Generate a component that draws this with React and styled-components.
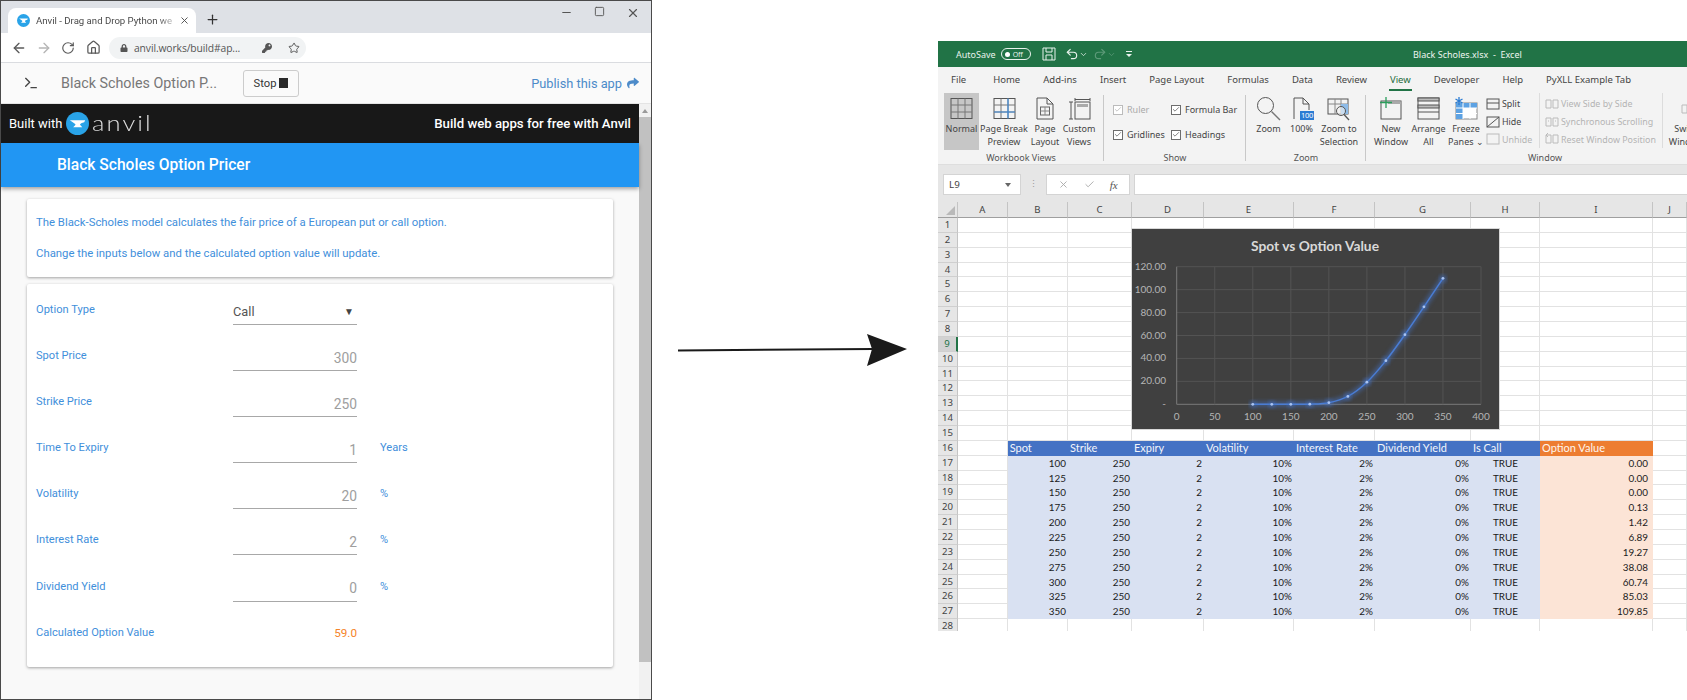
import React from "react";
import styled, { createGlobalStyle } from "styled-components";
import { ArrowLeft, ArrowRight, RotateCw, House, Star, X, Minus, Square, Plus, ChevronDown, Undo2, Redo2, Check, Terminal } from "lucide-react";
import { FaShare, FaKey, FaLock } from "react-icons/fa";

const Global = createGlobalStyle`
  html, body { margin: 0; padding: 0; background: #fff; }
  body { width: 1687px; height: 700px; overflow: hidden; font-family: Roboto, "Liberation Sans", sans-serif; }
  * { box-sizing: border-box; }
`;

const Page = styled.div`display: flex; width: 1687px; height: 700px; overflow: hidden; background: #fff;`;

/* ---------- browser ---------- */
const Browser = styled.div`
  width: 652px; height: 700px; flex: none; display: flex; flex-direction: column;
  border: 1px solid #4a4a4a; background: #f9f9f9;
`;
const TabStrip = styled.div`height: 32px; flex: none; background: #dee1e6; display: flex; align-items: flex-end; padding-left: 7px;`;
const Tab = styled.div`
  width: 188px; height: 25px; background: #fff; border-radius: 8px 8px 0 0; display: flex; align-items: center;
  padding: 0 0 0 9px; gap: 6px; color: #4a4a4a; font-size: 11px;
`;
const TabTitle = styled.span`
  width: 137px; flex: none; white-space: nowrap; overflow: hidden; font-size: 9.6px;
  -webkit-mask-image: linear-gradient(to right, #000 88%, rgba(0,0,0,.35));
`;
const NewTab = styled.div`margin: 0 0 4px 9px; height: 20px; display: flex; align-items: center; color: #333;`;
const WinButtons = styled.div`margin-left: auto; align-self: flex-start; display: flex; gap: 21px; padding: 5px 11px 0 0; color: #555;`;
const NavBar = styled.div`height: 30px; flex: none; background: #fff; border-bottom: 1px solid #dadce0; display: flex; align-items: center; padding-left: 10px;`;
const NavIcon = styled.span`width: 25px; display: flex; justify-content: flex-start; color: ${p => p.$dim ? "#b5b5b5" : "#5a5a5a"};`;
const UrlPill = styled.div`
  margin-left: -2px; width: 197px; height: 22px; border-radius: 11px; background: #f1f3f4; display: flex; align-items: center;
  padding-left: 11px; color: #555; font-size: 11px; font-family: "Open Sans", sans-serif;
`;
const UrlText = styled.span`margin-left: 6px; width: 128px; font-size: 10.3px; letter-spacing: -0.1px; white-space: nowrap;`;
const StarSlot = styled(NavIcon)`margin-left: 16px; width: 14px;`;
const AppBar = styled.div`height: 41px; flex: none; background: #fafafa; border-bottom: 1px solid #e4e4e4; display: flex; align-items: center; padding-left: 22px;`;
const AppTitle = styled.span`margin-left: 22px; width: 182px; color: #777; font-size: 14.3px; white-space: nowrap;`;
const StopButton = styled.div`
  width: 56px; height: 27px; border: 1px solid #ccc; border-radius: 3px; display: flex; align-items: center; justify-content: center; gap: 3px;
  color: #333; font-size: 11.2px; background: #fafafa;
`;
const StopSquare = styled.span`width: 9px; height: 10px; background: #2a2a2a;`;
const Publish = styled.div`margin-left: auto; padding-right: 12px; display: flex; align-items: center; gap: 5px; color: #4d8bc9; font-size: 12.8px;`;
const Viewport = styled.div`flex: 1; display: flex; min-height: 0;`;
const Main = styled.div`flex: 1; min-width: 0; display: flex; flex-direction: column;`;
const BlackBar = styled.div`height: 39px; flex: none; background: #181818; color: #fff; display: flex; align-items: center; padding: 0 8px; font-size: 13px;`;
const BuiltWith = styled.span`margin-right: 4px;`;
const Wordmark = styled.span`margin-left: 3px; font-family: Lato, sans-serif; font-weight: 300; font-size: 21px; letter-spacing: 1.7px; line-height: 1; color: #ddd; transform: scaleX(1.22); transform-origin: left; margin-top: -3px;`;
const BuildLink = styled.span`margin-left: auto; font-weight: 500; font-size: 13.2px;`;
const BlueBar = styled.div`
  height: 44px; flex: none; background: #2196f3; color: #fff; display: flex; align-items: center; padding-left: 56px;
  font-size: 15.6px; font-weight: 500; box-shadow: 0 2px 4px rgba(0,0,0,.35); position: relative;
`;
const Content = styled.div`padding: 12px 26px; display: flex; flex-direction: column; gap: 7px;`;
const Card = styled.div`background: #fff; padding: 0 9px; box-shadow: 0 1px 3px rgba(0,0,0,.35); border-radius: 2px;`;
const IntroCard = styled(Card)`height: 78px; padding-top: 16px;`;
const Para = styled.p`margin: 0 0 17px; color: #3f8fdb; font-size: 11.35px; line-height: 14px; white-space: nowrap;`;
const FormCard = styled(Card)`height: 383px; padding-top: 2px;`;
const Row = styled.div`height: 46.1px; display: grid; grid-template-columns: 197px 124px 23px auto; align-items: start;`;
const Label = styled.div`margin-top: 17px; line-height: 14px; font-size: 11.1px; color: #3f8fdb;`;
const Field = styled.div`
  margin-top: 15px; height: 24px; padding-bottom: 2px; display: flex; align-items: center; justify-content: ${p => p.$left ? "space-between" : "flex-end"};
  border-bottom: 1px solid #a8a8a8; font-size: ${p => p.$left ? 12.8 : 13.8}px; color: ${p => p.$left ? "#555" : "#9e9e9e"};
`;
const Arrowhead = styled.span`font-size: 10px; color: #444; margin-right: 3px;`;
const ValueText = styled.div`margin-top: 17px; line-height: 14px; text-align: right; font-size: 11.7px; color: #f5842a;`;
const Unit = styled.div`grid-column: 4; margin-top: 17px; line-height: 14px; font-size: 11.1px; color: #3f8fdb;`;
const Scrollbar = styled.div`width: 12px; flex: none; background: #f1f1f1; display: flex; flex-direction: column; align-items: center;`;
const ScrollUp = styled.div`height: 13px; flex: none; padding-top: 5px; &::before { content: ""; display: block; border: 3px solid transparent; border-top: 0; border-bottom: 4px solid #9a9a9a; }`;
const ScrollThumb = styled.div`width: 100%; height: 545px; background: #c1c1c1;`;

/* ---------- arrow ---------- */
const ArrowZone = styled.div`width: 286px; flex: none; padding: 333px 0 0 26px;`;

/* ---------- excel ---------- */
const Excel = styled.div`
  width: 749px; height: 590px; flex: none; margin-top: 41px; display: flex; flex-direction: column; overflow: hidden;
  font-family: "Noto Sans", sans-serif; background: #e6e6e6;
`;
const TitleBar = styled.div`height: 26px; flex: none; background: #217346; color: #fff; display: flex; align-items: center; font-size: 9px;`;
const QuickAccess = styled.div`width: 475px; flex: none; display: flex; align-items: center; padding-left: 18px; color: #e8f2ec;`;
const Toggle = styled.span`
  margin-left: 5px; width: 30px; height: 12px; border: 1px solid #e8f2ec; border-radius: 6px; display: flex; align-items: center; padding-left: 3px; gap: 3px; font-size: 7px;
  &::before { content: ""; width: 5px; height: 5px; border-radius: 50%; background: #fff; }
`;
const QaIcon = styled.span`display: flex; margin-left: ${p => p.$gap || 0}px; color: ${p => p.$dim ? "#5d9a79" : "#e8f2ec"};`;
const DocTitle = styled.span`white-space: pre; font-size: 9px; color: #eef5f0;`;
const TabRow = styled.div`height: 25px; flex: none; background: #f3f3f3; display: flex; align-items: center; gap: 23px; padding-left: 13px; font-size: 9.5px; color: #444;`;
const RibbonTab = styled.span`
  position: relative; white-space: nowrap; ${p => p.$first ? "margin-right: 4px;" : ""}
  ${p => p.$active ? `color: #1e6b40; &::after { content: ""; position: absolute; left: -1px; right: -1px; bottom: -5px; height: 2px; background: #217346; }` : ""}
`;
const Ribbon = styled.div`height: 73px; flex: none; background: #f3f3f3; display: flex; border-bottom: 1px solid #dedede;`;
const Group = styled.div`
  width: ${p => p.$w}px; flex: none; display: flex; flex-direction: column; position: relative;
  &::after { content: ${p => p.$noSep ? "none" : '""'}; position: absolute; right: 0; top: 3px; bottom: 3px; width: 1px; background: #c8c8c8; }
`;
const GroupBody = styled.div`flex: 1; display: flex; padding: 1px 0 0 ${p => p.$pad ?? 6}px; min-height: 0;`;
const GroupLabel = styled.div`height: 15px; flex: none; padding-top: 3px; text-align: center; font-size: 9px; line-height: 12px; color: #555;`;
const BigBtn = styled.div`
  width: ${p => p.$w}px; height: 57px; flex: none; display: flex; flex-direction: column; align-items: center; padding-top: 4px;
  background: ${p => p.$on ? "#c6c6c6" : "transparent"}; color: #444;
`;
const BigIcon = styled.span`height: 23px; display: flex; align-items: center; justify-content: center; flex: none; position: relative;`;
const BigText = styled.span`margin-top: 2px; font-size: 9px; line-height: 13px; text-align: center; white-space: pre; color: #444;`;
const Badge = styled.span`position: absolute; left: 7px; bottom: 0; background: #2b7cd3; color: #fff; font-size: 7.5px; line-height: 9px; padding: 0 1px; letter-spacing: -.3px;`;
const ShowGrid = styled.div`
  display: grid; grid-template-columns: 58px auto; grid-auto-rows: 25px; padding: 4px 0 0 3px; align-items: center;
`;
const CheckItem = styled.div`display: flex; align-items: center; gap: 4px; font-size: 9px; color: ${p => p.$off ? "#aaa" : "#444"}; white-space: nowrap;`;
const CheckBox = styled.span`width: 10px; height: 10px; border: 1px solid ${p => p.$off ? "#bbb" : "#6d6d6d"}; background: #fff; display: flex; align-items: center; justify-content: center; color: ${p => p.$off ? "#aaa" : "#444"};`;
const SmallCol = styled.div`
  width: ${p => p.$w}px; flex: none; display: flex; flex-direction: column; padding-top: 2px; ${p => p.$line ? "border-right: 1px solid #dcdcdc; margin-right: 5px; height: 55px;" : ""}
`;
const SmallItem = styled.div`height: 18.7px; display: flex; align-items: center; gap: 2px; font-size: 8.9px; color: ${p => p.$off ? "#b4b4b4" : "#444"}; white-space: nowrap;`;
const FormulaStrip = styled.div`height: 37px; flex: none; padding: 9px 0 7px 5px; display: flex; background: #e6e6e6;`;
const NameBox = styled.div`width: 78px; background: #fff; border: 1px solid #d4d4d4; display: flex; align-items: center; justify-content: space-between; padding: 0 9px 0 5px; font-size: 9.8px; color: #444;`;
const Caret = styled.span`border: 3px solid transparent; border-top: 4px solid #666; border-bottom: 0;`;
const Dots = styled.span`width: 25px; text-align: center; color: #999; font-size: 9px; line-height: 20px;`;
const FxBox = styled.div`width: 84px; background: #fff; border: 1px solid #d4d4d4; display: flex; align-items: center; justify-content: space-around; padding: 0 4px; color: #aaa;`;
const FxText = styled.span`font-family: "Liberation Serif", serif; font-style: italic; font-size: 11px; color: #555;`;
const FormulaInput = styled.div`flex: 1; margin-left: 4px; background: #fff; border: 1px solid #d4d4d4; border-right: 0;`;
const Sheet = styled.div`
  position: relative; height: 429px; flex: none; overflow: hidden; background: #fff; display: grid; font-family: Lato, sans-serif;
  grid-template-columns: 20px 49.7px 60.3px 64px 72px 90px 81px 96px 69px 113px 34px;
  grid-template-rows: 16px repeat(28, 14.87px);
`;
const Corner = styled.div`background: #e6e6e6; border-bottom: 1px solid #9f9f9f; border-right: 1px solid #c4c4c4; position: relative; &::after { content: ""; position: absolute; right: 2px; bottom: 2px; border-style: solid; border-width: 0 0 9px 9px; border-color: transparent transparent #b9b9b9 transparent; }`;
const ColHead = styled.div`
  background: #e6e6e6; border-bottom: 1px solid #9f9f9f; border-right: 1px solid #c4c4c4; text-align: center; color: #444;
  font-family: "Noto Sans", sans-serif; font-size: 9.6px; line-height: 15px;
`;
const RowHead = styled.div`
  background: ${p => p.$sel ? "#d2d2d2" : "#e6e6e6"}; border-bottom: 1px solid #cfcfcf; border-right: ${p => p.$sel ? "2px solid #217346" : "1px solid #c4c4c4"};
  text-align: center; color: ${p => p.$sel ? "#217346" : "#444"}; font-family: "Noto Sans", sans-serif; font-size: 9.6px; line-height: 14px;
`;
const tones = {
  plain: "background:#fff;border-right:1px solid #e2e2e2;border-bottom:1px solid #e2e2e2;color:#222;",
  head: "background:#4472c4;color:#f2f5fb;font-size:11px;",
  orangeHead: "background:#ed7d31;color:#fff5ee;font-size:11px;",
  data: "background:#d9e1f2;color:#1a1a1a;",
  orange: "background:#fce4d6;color:#1a1a1a;",
};
const Cell = styled.div`
  font-size: 9.9px; ${p => tones[p.$tone]} line-height: 14.5px; white-space: nowrap; padding: 0 ${p => p.$pr ?? 2}px 0 2px;
  text-align: ${p => p.$align || "right"};
`;
const ChartBox = styled.div`position: absolute; left: 194px; top: 27px; width: 367px; height: 200px; background: #404040; box-shadow: 0 0 0 1px #d8d8d8;`;

/* ---------- icons ---------- */
const AnvilMark = ({ size }) => (
  <svg width={size} height={size} viewBox="0 0 24 24">
    <circle cx="12" cy="12" r="12" fill="#29a3e8" />
    <path d="M4 8.5 H20 L19 10.8 C16.5 11.3 14.8 12.2 14.6 13.4 L17 16 H7.5 L10 13.4 C9.6 11.8 6.5 10.5 4 8.5Z" fill="#fff" />
  </svg>
);
const S = { fill: "none", stroke: "#555", strokeWidth: 1 };
const GridIcon = ({ blue }) => (
  <svg width="23" height="23" viewBox="0 0 23 23" {...S}>
    <rect x="1" y="1.5" width="21" height="20" />
    <path d="M8 1.5V21.5M15 1.5V21.5M1 8H22M1 15H22" stroke="#777" />
    {blue && <path d="M15 1.5V21.5M1 15H22" stroke="#3f8ad8" strokeWidth="1.2" />}
  </svg>
);
const DocIcon = () => (
  <svg width="18" height="23" viewBox="0 0 18 23" {...S}>
    <path d="M1 1H11L17 7V22H1Z M11 1V7H17" />
    <rect x="4.5" y="10" width="9" height="8" stroke="#666" />
    <path d="M4.5 14H13.5M9 10V18" stroke="#888" />
  </svg>
);
const CustomViewsIcon = () => (
  <svg width="23" height="23" viewBox="0 0 23 23" {...S}>
    <path d="M7 1V4M22 1V4M7 2.5H22" />
    <rect x="7" y="5" width="15" height="17" />
    <rect x="9" y="7" width="11" height="3" fill="#aaa" stroke="none" />
    <path d="M1 5H5M3 5V22M1 22H5" />
  </svg>
);
const MagnifierIcon = () => (
  <svg width="25" height="25" viewBox="0 0 25 25" {...S}>
    <circle cx="9.5" cy="9.5" r="8" />
    <path d="M15.5 15.5L24 24" stroke="#777" strokeWidth="1.4" />
  </svg>
);
const HundredDoc = () => (
  <svg width="17" height="23" viewBox="0 0 17 23" {...S}>
    <path d="M1 22V1H10L16 7V13M10 1V7H16" />
  </svg>
);
const ZoomSelIcon = () => (
  <svg width="24" height="24" viewBox="0 0 24 24" {...S}>
    <rect x="1" y="2" width="20" height="15" />
    <path d="M1 7H21M8 2V17M14 2V17" stroke="#888" />
    <rect x="14" y="7" width="7" height="10" fill="#8dbbe8" stroke="none" />
    <circle cx="14" cy="14" r="4.5" fill="#f3f3f3" fillOpacity=".6" />
    <path d="M17 17.5L22 23" strokeWidth="1.3" />
  </svg>
);
const NewWindowIcon = () => (
  <svg width="24" height="23" viewBox="0 0 24 23" {...S}>
    <rect x="2" y="4" width="20" height="18" />
    <rect x="9" y="4.5" width="13" height="2.5" fill="#aaa" stroke="none" />
    <path d="M7 0V11M1 5.5H13" stroke="#2c9d5c" strokeWidth="1.3" />
  </svg>
);
const ArrangeIcon = () => (
  <svg width="23" height="23" viewBox="0 0 23 23" {...S}>
    <rect x="1" y="1" width="21" height="21" />
    <rect x="1" y="1" width="21" height="3" fill="#bbb" />
    <rect x="1" y="8" width="21" height="3" fill="#bbb" />
    <path d="M1 15H22" />
  </svg>
);
const FreezeIcon = () => (
  <svg width="24" height="23" viewBox="0 0 24 23">
    <rect x="2" y="6" width="21" height="16" fill="#fff" stroke="#888" />
    <rect x="2" y="6" width="21" height="5" fill="#5da2e3" />
    <rect x="2" y="6" width="7" height="16" fill="#5da2e3" />
    <path d="M9 6V22M16 6V22M2 11H23M2 16.5H23" stroke="#fff" />
    <path d="M5 0V8M1.5 2L8.5 6M8.5 2L1.5 6" stroke="#2b7cd3" strokeWidth="1.3" />
  </svg>
);
const SplitIcon = ({ kind, off }) => (
  <svg width="14" height="12" viewBox="0 0 14 12" fill="none" stroke={off ? "#bbb" : "#555"}>
    <rect x="1" y="1" width="12" height="10" />
    {kind === "split" && <path d="M1 5H13" />}
    {kind === "hide" && <path d="M1 11L13 1" />}
  </svg>
);
const GreyPages = ({ kind }) => (
  <svg width="14" height="12" viewBox="0 0 14 12" fill="none" stroke="#bbb">
    <path d="M1 2H6V10H1Z M8 2H13V10H8Z" />
    {kind === "sync" && <path d="M3 5H4M10 5H11" />}
    {kind === "reset" && <path d="M3 0L1 2L3 4" />}
  </svg>
);

/* ---------- chart ---------- */
const spots = [100, 125, 150, 175, 200, 225, 250, 275, 300, 325, 350];
const values = ["0.00", "0.00", "0.00", "0.13", "1.42", "6.89", "19.27", "38.08", "60.74", "85.03", "109.85"];
const cx = v => 44.7 + (v / 400) * 304.3;
const cy = v => 175.3 - (v / 120) * 137.6;
const pts = spots.map((s, i) => [cx(s), cy(parseFloat(values[i]))]);
const linePath = pts.reduce((d, p, i) => {
  if (i === 0) return `M${p[0]} ${p[1]}`;
  const p0 = pts[i - 2] || pts[i - 1], p1 = pts[i - 1], p3 = pts[i + 1] || p;
  const c1 = [p1[0] + (p[0] - p0[0]) / 6, p1[1] + (p[1] - p0[1]) / 6];
  const c2 = [p[0] - (p3[0] - p1[0]) / 6, p[1] - (p3[1] - p1[1]) / 6];
  return `${d} C${c1[0]} ${c1[1]} ${c2[0]} ${c2[1]} ${p[0]} ${p[1]}`;
}, "");

const Chart = () => (
  <svg width="367" height="200" viewBox="0 0 367 200" fontFamily="Lato, sans-serif">
    <defs>
      <filter id="glow" x="-20%" y="-20%" width="140%" height="140%"><feGaussianBlur stdDeviation="2" /></filter>
    </defs>
    <text x="183" y="22" textAnchor="middle" fill="#d9d9d9" fontSize="13.8" fontWeight="700">Spot vs Option Value</text>
    {[0, 20, 40, 60, 80, 100, 120].map(v => (
      <g key={v}>
        <line x1="44.7" x2="349" y1={cy(v)} y2={cy(v)} stroke={v === 0 ? "#7a7a7a" : "#535353"} />
        <text x="34" y={cy(v) + 3} textAnchor="end" fill="#b5b5b5" fontSize="10">{v === 0 ? "-" : v.toFixed(2)}</text>
      </g>
    ))}
    {[0, 50, 100, 150, 200, 250, 300, 350, 400].map(v => (
      <g key={v}>
        <line x1={cx(v)} x2={cx(v)} y1="37.7" y2="175.3" stroke={v === 0 ? "#7a7a7a" : "#535353"} />
        <text x={cx(v)} y="191" textAnchor="middle" fill="#b5b5b5" fontSize="10">{v}</text>
      </g>
    ))}
    <path d={linePath} fill="none" stroke="#4472c4" strokeWidth="5" opacity=".55" filter="url(#glow)" />
    <path d={linePath} fill="none" stroke="#4a7dd4" strokeWidth="1.5" />
    {pts.map(p => <circle key={p[0]} cx={p[0]} cy={p[1]} r="3.4" fill="#4472c4" opacity=".6" filter="url(#glow)" />)}
    {pts.map(p => <circle key={p[0]} cx={p[0]} cy={p[1]} r="1.4" fill="#a9c4f2" />)}
  </svg>
);

/* ---------- data ---------- */
const formRows = [
  ["Spot Price", "300"], ["Strike Price", "250"], ["Time To Expiry", "1", "Years"],
  ["Volatility", "20", "%"], ["Interest Rate", "2", "%"], ["Dividend Yield", "0", "%"],
];
const columns = ["A", "B", "C", "D", "E", "F", "G", "H", "I", "J"];
const heads = ["Spot", "Strike", "Expiry", "Volatility", "Interest Rate", "Dividend Yield", "Is Call", "Option Value"];

const sheetCell = (row, col) => {
  const inside = col >= 1 && col <= 8;
  const key = `${row}-${col}`;
  if (row === 16 && inside) return <Cell key={key} $tone={col === 8 ? "orangeHead" : "head"} $align="left">{heads[col - 1]}</Cell>;
  if (row >= 17 && row <= 27 && inside) {
    const i = row - 17;
    const text = [spots[i], 250, 2, "10%", "2%", "0%", "TRUE", values[i]][col - 1];
    return <Cell key={key} $tone={col === 8 ? "orange" : "data"} $align={col === 7 ? "center" : "right"} $pr={col === 8 ? 5 : 2}>{text}</Cell>;
  }
  return <Cell key={key} $tone="plain" />;
};

export default function App() {
  return (
    <Page>
      <Global />
      <Browser>
        <TabStrip>
          <Tab>
            <AnvilMark size={13} />
            <TabTitle>Anvil - Drag and Drop Python we</TabTitle>
            <X size={11} />
          </Tab>
          <NewTab><Plus size={15} /></NewTab>
          <WinButtons><Minus size={13} /><Square size={11} /><X size={14} /></WinButtons>
        </TabStrip>
        <NavBar>
          <NavIcon><ArrowLeft size={16} /></NavIcon>
          <NavIcon $dim><ArrowRight size={16} /></NavIcon>
          <NavIcon><RotateCw size={14} /></NavIcon>
          <NavIcon><House size={15} /></NavIcon>
          <UrlPill>
            <FaLock size={8} />
            <UrlText>anvil.works/build#ap...</UrlText>
            <FaKey size={10} />
            <StarSlot><Star size={12} /></StarSlot>
          </UrlPill>
        </NavBar>
        <AppBar>
          <Terminal size={16} color="#444" />
          <AppTitle>Black Scholes Option P...</AppTitle>
          <StopButton>Stop<StopSquare /></StopButton>
          <Publish>Publish this app<FaShare size={12} /></Publish>
        </AppBar>
        <Viewport>
          <Main>
            <BlackBar>
              <BuiltWith>Built with</BuiltWith>
              <AnvilMark size={23} />
              <Wordmark>anvil</Wordmark>
              <BuildLink>Build web apps for free with Anvil</BuildLink>
            </BlackBar>
            <BlueBar>Black Scholes Option Pricer</BlueBar>
            <Content>
              <IntroCard>
                <Para>The Black-Scholes model calculates the fair price of a European put or call option.</Para>
                <Para>Change the inputs below and the calculated option value will update.</Para>
              </IntroCard>
              <FormCard>
                <Row>
                  <Label>Option Type</Label>
                  <Field $left>Call<Arrowhead>▼</Arrowhead></Field>
                </Row>
                {formRows.map(([label, value, unit]) => (
                  <Row key={label}>
                    <Label>{label}</Label>
                    <Field>{value}</Field>
                    {unit && <Unit>{unit}</Unit>}
                  </Row>
                ))}
                <Row>
                  <Label>Calculated Option Value</Label>
                  <ValueText>59.0</ValueText>
                </Row>
              </FormCard>
            </Content>
          </Main>
          <Scrollbar><ScrollUp /><ScrollThumb /></Scrollbar>
        </Viewport>
      </Browser>

      <ArrowZone>
        <svg width="230" height="34" viewBox="0 0 230 34">
          <path d="M0 16.5 L195 15 L195 17 L0 18.5Z" fill="#1a1a1a" />
          <path d="M189 1 L229 16 L189 33 L194 16Z" fill="#1a1a1a" />
        </svg>
      </ArrowZone>

      <Excel>
        <TitleBar>
          <QuickAccess>
            AutoSave
            <Toggle>Off</Toggle>
            <QaIcon $gap={11}>
              <svg width="14" height="14" viewBox="0 0 14 14" fill="none" stroke="currentColor"><path d="M1 1H13V13H1Z M4 1V5H10V1 M4 13V8H10V13" /></svg>
            </QaIcon>
            <QaIcon $gap={9}><Undo2 size={14} /></QaIcon>
            <QaIcon><ChevronDown size={9} /></QaIcon>
            <QaIcon $gap={5} $dim><Redo2 size={14} /></QaIcon>
            <QaIcon $dim><ChevronDown size={9} /></QaIcon>
            <QaIcon $gap={9}>
              <svg width="8" height="8" viewBox="0 0 8 8" fill="none" stroke="currentColor"><path d="M1 1.5H7" /><path d="M1 4L4 7L7 4Z" fill="currentColor" stroke="none" /></svg>
            </QaIcon>
          </QuickAccess>
          <DocTitle>Black Scholes.xlsx  -  Excel</DocTitle>
        </TitleBar>
        <TabRow>
          {["File", "Home", "Add-ins", "Insert", "Page Layout", "Formulas", "Data", "Review", "View", "Developer", "Help", "PyXLL Example Tab"].map((t, i) => (
            <RibbonTab key={t} $first={i === 0} $active={t === "View"}>{t}</RibbonTab>
          ))}
        </TabRow>
        <Ribbon>
          <Group $w={166}>
            <GroupBody>
              <BigBtn $w={35} $on><BigIcon><GridIcon /></BigIcon><BigText>Normal</BigText></BigBtn>
              <BigBtn $w={50}><BigIcon><GridIcon blue /></BigIcon><BigText>{"Page Break\nPreview"}</BigText></BigBtn>
              <BigBtn $w={32}><BigIcon><DocIcon /></BigIcon><BigText>{"Page\nLayout"}</BigText></BigBtn>
              <BigBtn $w={36}><BigIcon><CustomViewsIcon /></BigIcon><BigText>{"Custom\nViews"}</BigText></BigBtn>
            </GroupBody>
            <GroupLabel>Workbook Views</GroupLabel>
          </Group>
          <Group $w={142}>
            <GroupBody $pad={6}>
              <ShowGrid>
                <CheckItem $off><CheckBox $off><Check size={9} /></CheckBox>Ruler</CheckItem>
                <CheckItem><CheckBox><Check size={9} /></CheckBox>Formula Bar</CheckItem>
                <CheckItem><CheckBox><Check size={9} /></CheckBox>Gridlines</CheckItem>
                <CheckItem><CheckBox><Check size={9} /></CheckBox>Headings</CheckItem>
              </ShowGrid>
            </GroupBody>
            <GroupLabel>Show</GroupLabel>
          </Group>
          <Group $w={120}>
            <GroupBody $pad={5}>
              <BigBtn $w={35}><BigIcon><MagnifierIcon /></BigIcon><BigText>Zoom</BigText></BigBtn>
              <BigBtn $w={31}><BigIcon><HundredDoc /><Badge>100</Badge></BigIcon><BigText>100%</BigText></BigBtn>
              <BigBtn $w={44}><BigIcon><ZoomSelIcon /></BigIcon><BigText>{"Zoom to\nSelection"}</BigText></BigBtn>
            </GroupBody>
            <GroupLabel>Zoom</GroupLabel>
          </Group>
          <Group $w={358} $noSep>
            <GroupBody $pad={5}>
              <BigBtn $w={40}><BigIcon><NewWindowIcon /></BigIcon><BigText>{"New\nWindow"}</BigText></BigBtn>
              <BigBtn $w={35}><BigIcon><ArrangeIcon /></BigIcon><BigText>{"Arrange\nAll"}</BigText></BigBtn>
              <BigBtn $w={40}><BigIcon><FreezeIcon /></BigIcon><BigText>{"Freeze\nPanes ⌄"}</BigText></BigBtn>
              <SmallCol $w={54} $line>
                <SmallItem><SplitIcon kind="split" />Split</SmallItem>
                <SmallItem><SplitIcon kind="hide" />Hide</SmallItem>
                <SmallItem $off><SplitIcon off />Unhide</SmallItem>
              </SmallCol>
              <SmallCol $w={118} $line>
                <SmallItem $off><GreyPages />View Side by Side</SmallItem>
                <SmallItem $off><GreyPages kind="sync" />Synchronous Scrolling</SmallItem>
                <SmallItem $off><GreyPages kind="reset" />Reset Window Position</SmallItem>
              </SmallCol>
              <BigBtn $w={40}><BigIcon><GreyPages /></BigIcon><BigText>{"Switch\nWindows"}</BigText></BigBtn>
            </GroupBody>
            <GroupLabel>Window</GroupLabel>
          </Group>
        </Ribbon>
        <FormulaStrip>
          <NameBox>L9<Caret /></NameBox>
          <Dots>⋮</Dots>
          <FxBox><X size={11} /><Check size={11} /><FxText>fx</FxText></FxBox>
          <FormulaInput />
        </FormulaStrip>
        <Sheet>
          <Corner />
          {columns.map(c => <ColHead key={c}>{c}</ColHead>)}
          {Array.from({ length: 28 }, (_, r) => r + 1).map(row => (
            <React.Fragment key={row}>
              <RowHead $sel={row === 9}>{row}</RowHead>
              {columns.map((_, col) => sheetCell(row, col))}
            </React.Fragment>
          ))}
          <ChartBox><Chart /></ChartBox>
        </Sheet>
      </Excel>
    </Page>
  );
}
